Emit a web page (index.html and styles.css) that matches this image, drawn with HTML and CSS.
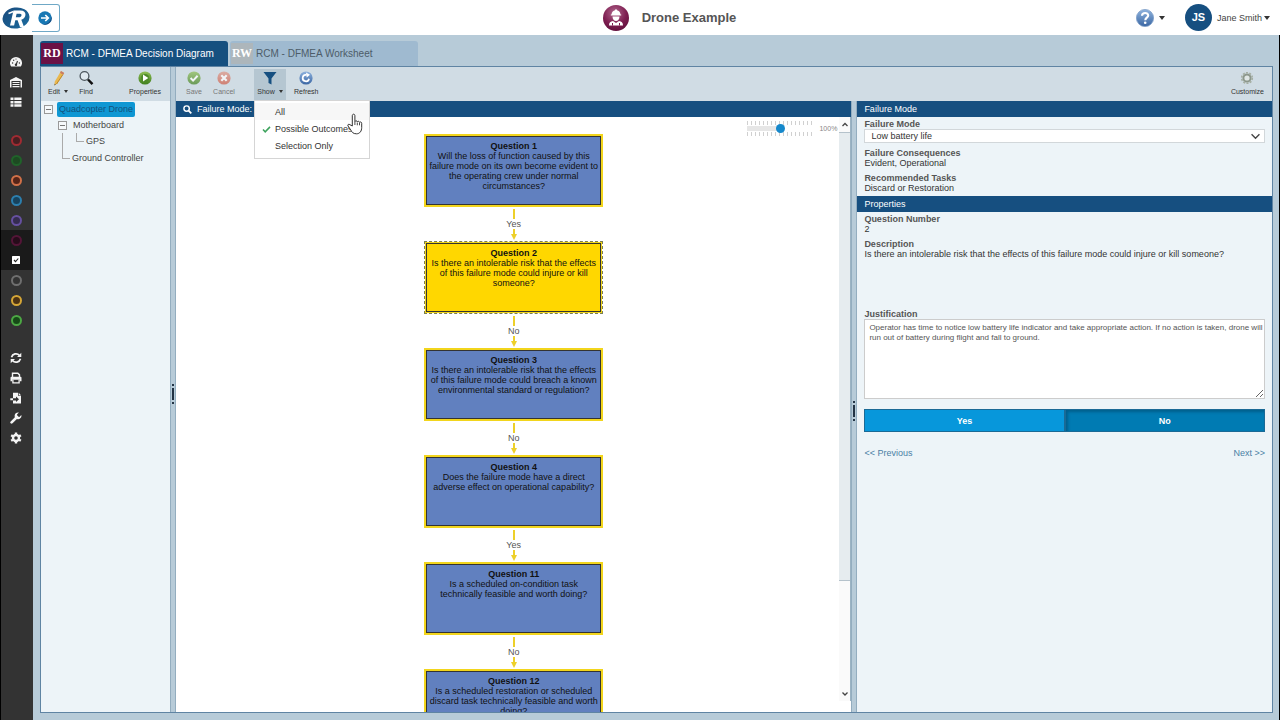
FILE: index.html
```html
<!DOCTYPE html>
<html lang="en">
<head>
<meta charset="utf-8">
<title>Drone Example</title>
<meta name="viewport" content="width=device-width, initial-scale=1">
<link rel="stylesheet" href="styles.css">
</head>
<body>
<svg class="defs" aria-hidden="true">
  <defs>
    <linearGradient id="g-green" x1="0" y1="0" x2="0" y2="1"><stop offset="0" stop-color="#8fbf55"/><stop offset="1" stop-color="#3f7f1d"/></linearGradient>
    <linearGradient id="g-blue" x1="0" y1="0" x2="0" y2="1"><stop offset="0" stop-color="#8fb3de"/><stop offset="1" stop-color="#3a66a3"/></linearGradient>
    <linearGradient id="g-red" x1="0" y1="0" x2="0" y2="1"><stop offset="0" stop-color="#e09a8a"/><stop offset="1" stop-color="#cf5a45"/></linearGradient>
    <linearGradient id="g-logo" x1="0" y1="0" x2="1" y2="1"><stop offset="0" stop-color="#1a4a7c"/><stop offset="1" stop-color="#1b6c9f"/></linearGradient>
    <radialGradient id="g-plum" cx=".45" cy=".3" r=".75"><stop offset="0" stop-color="#b0668c"/><stop offset=".6" stop-color="#7d1d50"/><stop offset="1" stop-color="#5f0f3a"/></radialGradient>
  </defs>
</svg>

<header class="top">
  <svg class="logo" viewBox="0 0 28 24" role="img" aria-label="Home">
    <ellipse cx="14" cy="12" rx="13.5" ry="10.500" fill="url(#g-logo)" transform="rotate(-8 14 12)"/>
    <path fill-rule="evenodd" d="M8 19.500L11.500 4.500H18.500C25.500 4.500 24.500 12.500 19.300 13.800L22 21H18L15.600 14.300H13.300L12.100 19.500zM14.600 7.700L13.800 11.300H17C19.800 11.300 20.500 7.700 18 7.700z" fill="#fff"/>
    <path d="M6.500 7.500l5-2" stroke="#fff" stroke-width="1.500" fill="none"/>
  </svg>
  <button class="expand" aria-label="Expand">
    <svg viewBox="0 0 14 14"><circle cx="7" cy="7" r="6.700" fill="#1878b4"/><path d="M13.500 5a6.700 6.700 0 0 1-9 8.200A8 8 0 0 0 13.500 5" fill="#174f85"/><path d="M3 7h7M7.300 4l3 3-3 3" stroke="#fff" stroke-width="1.700" fill="none"/></svg>
  </button>
  <div class="project">
    <svg viewBox="0 0 26 26"><circle cx="13" cy="13" r="13" fill="url(#g-plum)"/><g fill="#fff"><path d="M8.500 9.500c.3-2.500 1.800-4 3.500-4.300V4.500h2v.7c1.800.3 3.200 1.800 3.500 4.300h.7v1H7.800v-1z"/><path d="M9.500 11.500h7c0 2.500-1.500 4.500-3.500 4.500s-3.500-2-3.500-4.500"/><path d="M6 20.500c0-3 1.500-4 4-4.500l3 2 3-2c2.500.5 4 1.500 4 4.500z"/></g><path d="M9.500 18v2.500M16.500 18v2.500" stroke="#7d1d50"/></svg>
    <h1 class="project-name">Drone Example</h1>
  </div>
  <div class="account">
    <button class="help" aria-label="Help">
      <svg class="help-icon" viewBox="0 0 18 18"><circle cx="9" cy="9" r="8.600" fill="url(#g-blue)" stroke="#7f9fc9" stroke-width=".8"/><path d="M6 6.700c.2-3.600 6.200-3.600 6.200-.2 0 2.200-2.900 2.200-2.900 4.700" stroke="#fff" stroke-width="2.100" fill="none"/><circle cx="9.200" cy="13.700" r="1.300" fill="#fff"/></svg>
      <span class="caret"></span>
    </button>
    <button class="user"><span class="avatar">JS</span><span>Jane Smith</span><span class="caret"></span></button>
  </div>
</header>

<div class="shell">
  <nav class="rail" aria-label="Main">
    <div class="rail-group">
      <button aria-label="Dashboard"><svg viewBox="0 0 12 12"><path d="M1.200 10.500A6 6 0 1 1 10.800 10.500z" fill="#f4f4f4"/><path d="M6 9l1.500-4" stroke="#333" stroke-width="1.100"/><g fill="#333"><circle cx="6" cy="8.800" r="1.200"/><circle cx="2.600" cy="7" r=".7"/><circle cx="3.700" cy="4.200" r=".7"/><circle cx="6" cy="3" r=".6"/><circle cx="9.400" cy="7" r=".7"/></g></svg></button>
      <button aria-label="Library"><svg viewBox="0 0 12 12"><path d="M0 4l6-3 6 3v7.500h-1.500V5h-9v6.500H0z" fill="#f4f4f4"/><path d="M2.500 6.500h7M2.500 8.500h7M2.500 10.700h7" stroke="#f4f4f4" stroke-width="1.200"/></svg></button>
      <button aria-label="List"><svg viewBox="0 0 12 12" fill="#f4f4f4"><path d="M.5 1.500h3v2.600h-3zM4.300 1.500h7.200v2.600H4.300zM.5 4.900h3v2.500h-3zM4.300 4.900h7.200v2.500H4.300zM.5 8.200h3v2.600h-3zM4.300 8.200h7.200v2.600H4.300z"/></svg></button>
    </div>
    <div class="rail-group">
      <button aria-label="Red module"><span class="ring red"></span></button>
      <button aria-label="Green module"><span class="ring green"></span></button>
      <button aria-label="Orange module"><span class="ring orange"></span></button>
      <button aria-label="Blue module"><span class="ring blue"></span></button>
      <button aria-label="Purple module"><span class="ring purple"></span></button>
      <button class="on" aria-label="RCM module"><span class="ring plum"></span></button>
      <button class="on" aria-label="Diagram"><svg class="small" viewBox="0 0 10 10"><rect x="1" y="1" width="8" height="8" rx=".6" fill="#fff"/><path d="M3 5l1.500 1.600L7.300 3.500" stroke="#222" stroke-width="1.100" fill="none"/></svg></button>
      <button aria-label="Gray module"><span class="ring gray"></span></button>
      <button aria-label="Gold module"><span class="ring gold"></span></button>
      <button aria-label="Lime module"><span class="ring lime"></span></button>
    </div>
    <div class="rail-group">
      <button aria-label="Sync"><svg viewBox="0 0 12 12"><path d="M1.500 5.200A4.600 4.600 0 0 1 9.500 3.500M10.500 6.800A4.600 4.600 0 0 1 2.500 8.500" stroke="#f4f4f4" stroke-width="1.700" fill="none"/><path d="M11.300.8v4.300H7zM.7 11.200V6.900H5z" fill="#f4f4f4"/></svg></button>
      <button aria-label="Print"><svg viewBox="0 0 12 12"><path d="M2.500 5V1.200h5.300l1.700 1.700V5" stroke="#f4f4f4" stroke-width="1.400" fill="none"/><path d="M1.500 4.700h9q1 0 1 1v3.600H9.800V7.700H2.200v1.600H.5V5.700q0-1 1-1" fill="#f4f4f4"/><path d="M2.900 7.800v3h6.200v-3" stroke="#f4f4f4" stroke-width="1.300" fill="none"/></svg></button>
      <button aria-label="Import"><svg viewBox="0 0 12 12"><path d="M3 .8h5v3h3v7.700H3V8.500h3V10l3-2.700-3-2.700v1.600H3z" fill="#f4f4f4"/><path d="M8.700.8L11 3.200H8.700zM.3 6.300H3v2H.3z" fill="#f4f4f4"/></svg></button>
      <button aria-label="Tools"><svg viewBox="0 0 12 12"><path d="M1.600 10.400L7 5" stroke="#f4f4f4" stroke-width="2.600" stroke-linecap="round"/><path d="M11.300 3L9.400 4.900 7.300 4.600 7 2.600 8.900.6a3.400 3.400 0 1 0 2.400 2.400" fill="#f4f4f4"/></svg></button>
      <button aria-label="Settings"><svg viewBox="0 0 12 12"><circle cx="6" cy="6" r="3" stroke="#f4f4f4" stroke-width="2.400" fill="none"/><path d="M6 .4v2M6 9.600v2M1.150 3.200l1.700 1M9.150 7.800l1.700 1M1.150 8.800l1.700-1M9.150 4.200l1.700-1" stroke="#f4f4f4" stroke-width="2.400"/></svg></button>
    </div>
  </nav>

  <main class="work">
    <div class="tabs" role="tablist">
      <button class="tab active" role="tab" aria-selected="true"><span class="badge">RD</span>RCM - DFMEA Decision Diagram</button>
      <button class="tab" role="tab" aria-selected="false"><span class="badge">RW</span>RCM - DFMEA Worksheet</button>
    </div>

    <div class="frame">
      <section class="side">
        <div class="toolbar">
          <button class="tool"><svg viewBox="0 0 16 16"><path d="M11 1l3.200 2-6.700 10.500-3 2 .2-3.800z" fill="#e9b84f"/><path d="M11 1l3.200 2-1.100 1.700-3.100-2z" fill="#c87a6a"/><path d="M12.800 4.700L6.500 14" stroke="#b5812a" stroke-width=".9"/><path d="M4.500 15.500l.1-1.700 1.200.8z" fill="#444"/></svg><span>Edit <i class="caret tiny"></i></span></button>
          <button class="tool"><svg viewBox="0 0 16 16"><circle cx="6.500" cy="6" r="4.400" fill="#dfe9ef" stroke="#4b555c" stroke-width="1.300"/><path d="M10 9.500l4.500 4.700" stroke="#111" stroke-width="2.500"/></svg><span>Find</span></button>
          <button class="tool push"><svg viewBox="0 0 16 16"><circle cx="8" cy="8" r="6.600" fill="url(#g-green)"/><circle cx="8" cy="8" r="4" fill="#4e8a2a"/><path d="M6 4.600l5.300 3.400L6 11.400z" fill="#fff"/></svg><span>Properties</span></button>
        </div>
        <ul class="tree">
          <li><div class="node-row"><button class="toggle" aria-label="Collapse"></button><span class="label selected">Quadcopter Drone</span></div>
            <ul class="branch">
              <li><div class="node-row"><button class="toggle" aria-label="Collapse"></button><span class="label">Motherboard</span></div>
                <ul class="branch inner"><li class="leaf"><span class="label">GPS</span></li></ul>
              </li>
              <li class="leaf"><span class="label">Ground Controller</span></li>
            </ul>
          </li>
        </ul>
      </section>
      <div class="splitter"><span class="grip"></span></div>

      <section class="content">
        <div class="toolbar wide">
          <button class="tool dim"><svg viewBox="0 0 16 16"><circle cx="8" cy="8" r="6.600" fill="url(#g-green)"/><path d="M4.600 8l2.500 2.600 4.500-4.800" stroke="#fff" stroke-width="2" fill="none"/></svg><span>Save</span></button>
          <button class="tool dim"><svg viewBox="0 0 16 16"><circle cx="8" cy="8" r="6.600" fill="url(#g-red)"/><path d="M5.300 5.300l5.400 5.400M10.700 5.300l-5.400 5.400" stroke="#fff" stroke-width="2.200"/></svg><span>Cancel</span></button>
          <div class="menu-host">
            <button class="tool pressed" aria-expanded="true"><svg viewBox="0 0 16 16"><path d="M1.500 2h13L9.500 8.500v6l-3-1.500V8.500z" fill="#164f80"/></svg><span>Show <i class="caret tiny"></i></span></button>
            <div class="menu" role="menu">
              <button class="hover" role="menuitem">All</button>
              <button role="menuitem"><svg class="tick" viewBox="0 0 10 8"><path d="M1 4l2.500 2.700L9 1" stroke="#3da35d" stroke-width="1.700" fill="none"/></svg>Possible Outcomes</button>
              <button role="menuitem">Selection Only</button>
              <svg class="pointer" viewBox="0 0 16 22"><path d="M5.300 13V2.700c0-2 2.600-2 2.600 0v6c.3-1.400 2.300-1.200 2.400.2.400-1 2.100-.8 2.200.5.500-.8 2.200-.5 2.200.9v4.200c0 3.500-1.800 6.300-5.200 6.300-3.500 0-4.500-1.600-5.800-3.900L1 13c-.8-1.400.9-2.400 1.900-1.300z" fill="#fff" stroke="#333" stroke-width="1"/><path d="M7.900 9v3M10.300 9.500v2.800M12.500 10v2.300" stroke="#333" stroke-width=".9"/></svg>
            </div>
          </div>
          <button class="tool"><svg viewBox="0 0 16 16"><circle cx="8" cy="8" r="6.600" fill="url(#g-blue)"/><path d="M11 8.700A3.200 3.200 0 1 1 8.500 4.900" stroke="#fff" stroke-width="1.700" fill="none"/><path d="M8 2.500l4 2.300-3.300 2.700z" fill="#fff"/></svg><span>Refresh</span></button>
          <button class="tool push"><svg viewBox="0 0 16 16"><circle cx="8" cy="8" r="3.600" fill="#dfe6e4" stroke="#8c978b" stroke-width="2"/><circle cx="8" cy="8" r="5.300" fill="none" stroke="#a5aea2" stroke-width="1.600" stroke-dasharray="2 1.330"/></svg><span>Customize</span></button>
        </div>

        <div class="panes">
          <section class="diagram">
            <h2 class="bar"><svg class="lens" viewBox="0 0 10 10"><circle cx="4" cy="4" r="3" stroke="#fff" stroke-width="1.600" fill="none"/><path d="M6.200 6.200l3 3" stroke="#fff" stroke-width="2"/></svg>Failure Mode:</h2>
            <div class="canvas">
              <div class="flow">
                <article class="card"><h3>Question 1</h3><p>Will the loss of function caused by this failure mode on its own become evident to the operating crew under normal circumstances?</p></article>
                <div class="link"><span>Yes</span></div>
                <article class="card current"><h3>Question 2</h3><p>Is there an intolerable risk that the effects of this failure mode could injure or kill someone?</p></article>
                <div class="link"><span>No</span></div>
                <article class="card"><h3>Question 3</h3><p>Is there an intolerable risk that the effects of this failure mode could breach a known environmental standard or regulation?</p></article>
                <div class="link"><span>No</span></div>
                <article class="card"><h3>Question 4</h3><p>Does the failure mode have a direct adverse effect on operational capability?</p></article>
                <div class="link"><span>Yes</span></div>
                <article class="card"><h3>Question 11</h3><p>Is a scheduled on-condition task technically feasible and worth doing?</p></article>
                <div class="link"><span>No</span></div>
                <article class="card"><h3>Question 12</h3><p>Is a scheduled restoration or scheduled discard task technically feasible and worth doing?</p></article>
              </div>
              <div class="zoom"><input type="range" min="0" max="200" value="100" aria-label="Zoom"><output>100%</output></div>
              <div class="scroll">
                <svg viewBox="0 0 8 8"><path d="M1.500 5.500L4 3l2.500 2.500" stroke="#444" stroke-width="1.300" fill="none"/></svg>
                <span class="thumb"></span><span class="rest"></span>
                <svg viewBox="0 0 8 8"><path d="M1.500 3L4 5.500 6.500 3" stroke="#444" stroke-width="1.300" fill="none"/></svg>
              </div>
            </div>
          </section>
          <div class="splitter low"><span class="grip"></span></div>
          <section class="details">
            <h2 class="bar">Failure Mode</h2>
            <div class="group">
              <div class="field"><label for="mode">Failure Mode</label>
                <select id="mode"><option>Low battery life</option></select></div>
              <div class="field"><strong>Failure Consequences</strong><span>Evident, Operational</span></div>
              <div class="field"><strong>Recommended Tasks</strong><span>Discard or Restoration</span></div>
            </div>
            <h2 class="bar">Properties</h2>
            <div class="group">
              <div class="field"><strong>Question Number</strong><span>2</span></div>
              <div class="field tall"><strong>Description</strong><span>Is there an intolerable risk that the effects of this failure mode could injure or kill someone?</span></div>
              <div class="field"><label for="why">Justification</label>
                <textarea id="why">Operator has time to notice low battery life indicator and take appropriate action. If no action is taken, drone will run out of battery during flight and fall to ground.</textarea></div>
              <div class="answers"><button>Yes</button><button class="chosen">No</button></div>
              <div class="pager"><a href="#previous">&lt;&lt; Previous</a><a href="#next">Next &gt;&gt;</a></div>
            </div>
          </section>
        </div>
      </section>
    </div>
  </main>
</div>
</body>
</html>
```

FILE: styles.css
```css
* { box-sizing: border-box; }
body {
  margin: 0;
  height: 100vh;
  display: flex;
  flex-direction: column;
  overflow: hidden;
  font: 9px/10px "Liberation Sans", Arial, sans-serif;
  color: #333;
  background: #fff;
}
button, select, textarea { font: inherit; color: inherit; }
button { border: 0; padding: 0; background: none; }
h1, h2, h3, p, ul { margin: 0; padding: 0; font-size: inherit; }
ul { list-style: none; }
svg { display: block; flex: none; }
.defs { position: absolute; width: 0; height: 0; }

.caret {
  display: inline-block;
  border: 3px solid transparent;
  border-top: 4px solid #333;
  border-bottom: 0;
}
.caret.tiny { border-width: 2px; border-top-width: 3px; border-bottom: 0; margin: 0 0 1px 2px; }

/* Header */
.top {
  flex: none;
  height: 35px;
  display: grid;
  grid-template-columns: 1fr auto 1fr;
  align-items: center;
  padding-right: 10px;
}
.logo { width: 28px; height: 24px; margin-left: 2px; grid-row: 1; grid-column: 1; }
.expand {
  grid-row: 1;
  grid-column: 1;
  margin-left: 32px;
  width: 28px;
  height: 28px;
  padding: 6px;
  border: 1px solid #6fa8c6;
  border-left: 0;
  border-radius: 0 3px 3px 0;
}
.expand svg { width: 14px; height: 14px; }
.project { grid-column: 2; display: flex; align-items: center; gap: 13px; padding-left: 69px; }
.project svg { width: 26px; height: 26px; }
.project-name { font-size: 13px; line-height: 16px; color: #555; }
.account { grid-column: 3; display: flex; justify-content: flex-end; align-items: center; gap: 20px; }
.help { display: flex; align-items: center; gap: 5px; }
.help-icon { width: 18px; height: 18px; }
.user { display: flex; align-items: center; gap: 5px; color: #444; }
.user .caret { margin-left: -3px; }
.avatar {
  width: 27px;
  height: 27px;
  border-radius: 50%;
  background: #164f80;
  color: #fff;
  font-size: 11px;
  font-weight: bold;
  line-height: 27px;
}

/* Left rail */
.shell { flex: 1; min-height: 0; display: flex; border-right: 1px solid #000; }
.rail {
  flex: none;
  width: 33px;
  padding-top: 17px;
  display: flex;
  flex-direction: column;
  gap: 18px;
  background: #333;
  border-left: 1px solid #000;
}
.rail button { display: flex; width: 100%; height: 20px; align-items: center; justify-content: center; padding-right: 2px; }
.rail svg { width: 12px; height: 12px; }
.rail svg.small { width: 10px; height: 10px; }
.rail .on { background: #1a1a1a; }
.ring { width: 11px; height: 11px; border-radius: 50%; border: 2px solid; }
.red { border-color: #a02b32; background: #471f22; }
.green { border-color: #20632a; background: #1d4a22; }
.orange { border-color: #d07048; background: #552418; }
.blue { border-color: #2c7fae; background: #17435e; }
.purple { border-color: #6650a0; background: #352c50; }
.plum { border-color: #541537; background: #260c1a; }
.gray { border-color: #6f6f6f; background: #333; }
.gold { border-color: #d5a637; background: #4c3213; }
.lime { border-color: #4ca844; background: #164a17; }

/* Work area */
.work { flex: 1; min-width: 0; display: flex; flex-direction: column; padding: 6px 6px 7px 7px; background: #b7cbd8; }
.tabs { flex: none; display: flex; gap: 2px; height: 25px; }
.tab {
  width: 188px;
  display: flex;
  align-items: center;
  gap: 3px;
  padding-left: 1px;
  border-radius: 3px 3px 0 0;
  font-size: 10px;
  line-height: 14px;
  color: #4d5c68;
  background: #9fbad0;
  white-space: nowrap;
}
.badge {
  width: 22px;
  height: 21px;
  background: #adb6bb;
  color: #fff;
  font: bold 12px/21px "Liberation Serif", "Times New Roman", serif;
}
.tab.active { color: #fff; background: #16507f; }
.tab.active .badge { background: #6b1145; }
.frame { flex: 1; min-height: 0; display: flex; border: 1px solid #5f84a3; background: #edf4f8; }
.side { flex: none; width: 129px; background: #edf4f8; }
.splitter {
  flex: none;
  width: 6px;
  display: flex;
  align-items: center;
  justify-content: center;
  padding-top: 8px;
  background: #b7cbd8;
  border: 1px solid #93adbf;
  border-width: 0 1px 0 1px;
}
.grip { width: 2px; height: 20px; background: linear-gradient(#234 0 2px, transparent 2px 4px, #234 4px 16px, transparent 16px 18px, #234 18px); }
.toolbar {
  height: 34px;
  display: flex;
  align-items: stretch;
  background: #d0dce4;
  padding: 0 9px 0 5px;
}
.tool {
  display: flex;
  flex-direction: column;
  align-items: center;
  gap: 1px;
  padding-top: 3px;
  min-width: 24px;
  margin-right: 4px;
  font-size: 7px;
  line-height: 9px;
  white-space: nowrap;
}
.tool svg { width: 16px; height: 16px; }
.tool.push { margin: 0 0 0 auto; }
.wide { flex: none; padding: 0 8px 0 6px; }
.tool.dim { color: #777; margin-right: 6px; }
.dim svg { opacity: .7; }
.menu-host { position: relative; display: flex; margin: 0 8px 0 12px; }
.tool.pressed { width: 32px; margin: 2px 0 0; padding-top: 1px; background: #b5c6d1; }

/* Show menu */
.menu {
  position: absolute;
  z-index: 5;
  top: 33px;
  left: 0;
  width: 116px;
  padding: 2px 0 4px;
  background: #fff;
  border: 1px solid #d5d5d5;
}
.menu button { display: block; position: relative; width: 100%; height: 17px; padding-left: 20px; text-align: left; font-size: 9px; }
.menu .hover { background: #f7f7f7; }
.tick { position: absolute; left: 7px; top: 6px; width: 9px; height: 7px; }
.pointer { position: absolute; left: 92px; top: 12px; width: 16px; height: 22px; }

/* Tree */
.tree { padding: 0 3px; color: #444; }
.label { display: inline-block; height: 16px; line-height: 16px; padding: 0 2px; white-space: nowrap; }
.selected { height: 15px; line-height: 15px; border-radius: 2px; background: #0f97d3; color: #13517c; }
.node-row { display: flex; align-items: center; height: 16px; }
.toggle {
  width: 9px;
  height: 9px;
  margin-right: 4px;
  border: 1px solid #999;
  background: linear-gradient(#777, #777) center / 5px 1px no-repeat #f6f9fb;
}
.branch { margin-left: 14px; }
.branch > .leaf { display: flex; height: 17px; padding-left: 12px; background: linear-gradient(#aaa, #aaa) 4px 8px / 8px 1px no-repeat, linear-gradient(#aaa, #aaa) 4px 0 / 1px 8px no-repeat; }
.branch.inner { margin-left: 0; padding-left: 14px; background: linear-gradient(#aaa, #aaa) 4px 0 / 1px 100% no-repeat; }

/* Diagram */
.content { flex: 1; min-width: 0; display: flex; flex-direction: column; }
.panes { flex: 1; min-height: 0; display: flex; }
.diagram { flex: 676 1 0; min-width: 0; display: flex; flex-direction: column; background: #fff; }
.bar {
  flex: none;
  display: flex;
  align-items: center;
  gap: 5px;
  height: 16px;
  padding: 0 7px;
  font-size: 9px;
  font-weight: normal;
  line-height: 16px;
  color: #fff;
  background: #164f80;
}
.lens { width: 9px; height: 9px; }
.canvas { flex: 1; min-height: 0; position: relative; overflow: hidden; }
.flow { display: flex; flex-direction: column; align-items: center; padding-top: 17px; color: #111; text-align: center; }
.card {
  flex: none;
  width: 175px;
  height: 69px;
  margin: 2px;
  padding: 4px 1px;
  border: 1px solid #333;
  outline: 2px solid #f2d51c;
  background: #6180bf;
}
.card.current { background: #ffd700; outline: 1px dashed #7a7f55; outline-offset: 1px; box-shadow: 0 0 0 1px #f2d51c; }
.link {
  flex: none;
  position: relative;
  height: 34px;
  padding: 12px 0;
  width: 20px;
  color: #555;
  background: linear-gradient(#edd02a, #edd02a) center 2px / 2px 28px no-repeat;
}
.link span { display: block; background: #fff; }
.link::after {
  content: "";
  position: absolute;
  left: 7px;
  bottom: 1px;
  border: 3px solid transparent;
  border-top: 6px solid #edd02a;
  border-bottom: 0;
}
.zoom { position: absolute; top: 4px; right: 14px; display: flex; align-items: center; gap: 5px; font-size: 7px; color: #888; }
.zoom input {
  appearance: none;
  width: 67px;
  height: 15px;
  margin: 0;
  background:
    linear-gradient(#fff, #fff) center / 100% 7px no-repeat,
    repeating-linear-gradient(90deg, #d0d0d0 0 1px, transparent 1px 4px);
}
.zoom input::-webkit-slider-runnable-track { height: 9px; background: linear-gradient(90deg, #e6e6e6 50%, transparent 50%) center / 100% 5px no-repeat; }
.zoom input::-webkit-slider-thumb { appearance: none; width: 9px; height: 9px; border-radius: 50%; background: #1588cb; }
.scroll { position: absolute; top: 0; right: 0; bottom: 11px; width: 12px; display: flex; flex-direction: column; align-items: center; background: #fafafa; border-right: 1px solid #9bb3c3; }
.scroll svg { width: 8px; height: 15px; }
.thumb { flex: 449 1 0; width: 100%; background: #e6ecef; border: 1px solid #b5c2cb; border-width: 1px 0; }
.rest { flex: 105 1 0; }

/* Details */
.details { flex: 415 1 0; min-width: 0; background: #edf4f8; }
.group { padding: 2px 7px 0; }
.field { margin-bottom: 3px; }
.field label, .field strong, .field span { display: block; }
.field label, .field strong { font-weight: bold; color: #555; }
.field select {
  appearance: none;
  display: block;
  width: 100%;
  height: 14px;
  padding: 0 6px;
  border: 1px solid #d2d7da;
  border-radius: 0;
  background: url("data:image/svg+xml,%3Csvg xmlns='http://www.w3.org/2000/svg' viewBox='0 0 8 6'%3E%3Cpath d='M.5 1L4 4.500 7.500 1' stroke='%23444' stroke-width='1.200' fill='none'/%3E%3C/svg%3E") right 4px center / 9px 7px no-repeat #fff;
}
.group .field + .field { margin-top: 5px; }
.group .tall { height: 65px; }
.field textarea {
  display: block;
  width: 100%;
  height: 80px;
  padding: 3px 0 3px 4px;
  border: 1px solid #ccc;
  background: #fff;
  color: #555;
  font-size: 8px;
  line-height: 10px;
}
.answers { display: flex; margin-top: 10px; }
.answers button { flex: 1; height: 23px; border: 1px solid #1a6a96; background: #0797db; color: #fff; font-weight: bold; }
.answers .chosen { background: #007bb3; box-shadow: inset 2px 2px 3px #005f8c; }
.pager { display: flex; justify-content: space-between; margin-top: 16px; }
.pager a { color: #4a7fa5; text-decoration: none; }
```
